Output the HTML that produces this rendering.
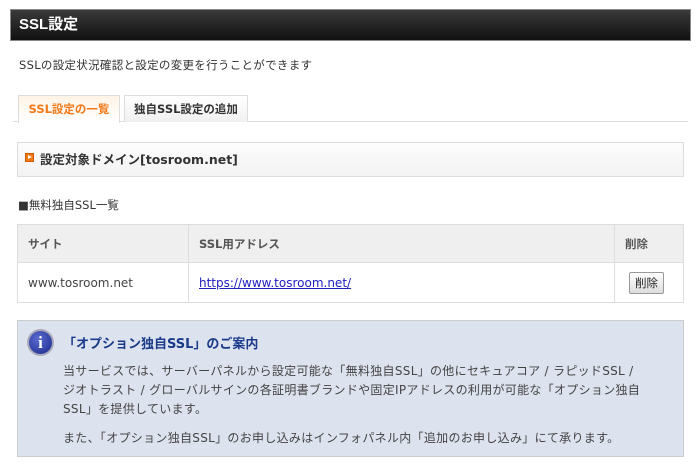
<!DOCTYPE html>
<html><head><meta charset="utf-8"><style>
*{margin:0;padding:0;box-sizing:border-box}
body{width:700px;height:470px;background:#fff;font-family:"DejaVu Sans","Noto Sans CJK JP",sans-serif;color:#333;font-size:12px;position:relative;overflow:hidden}
.a{position:absolute}
.hd{left:10px;top:9px;width:681px;height:32px;background:linear-gradient(#3a3a3a,#111);border:1px solid #888;color:#fff;font-weight:bold;font-size:15px;line-height:30px;padding-left:8px;font-family:"Liberation Sans","Noto Sans CJK JP",sans-serif}
.tab{top:95px;height:27px;border:1px solid #ddd;border-bottom:none;font-weight:bold;font-size:11.5px;line-height:26px;text-align:center}
table{border-collapse:collapse;font-size:12px}
td,th{border:1px solid #ddd;text-align:left;padding-left:10px}
th{background:#efefef;height:38px;color:#555;font-size:11.5px}
td{height:40px;color:#444}
.j{letter-spacing:0.3px}
</style></head><body>
<div class="a hd">SSL設定</div>
<div class="a j" style="left:19px;top:57px;font-size:11.5px">SSLの設定状況確認と設定の変更を行うことができます</div>
<div class="a" style="left:13px;top:121px;width:675px;height:1px;background:#ddd"></div>
<div class="a tab" style="left:18px;width:102px;background:linear-gradient(#fff3e6,#fff);color:#f27a1a;height:28px">SSL設定の一覧</div>
<div class="a tab" style="left:124px;width:124px;background:linear-gradient(#fff,#f0f0f0);color:#333">独自SSL設定の追加</div>
<div class="a" style="left:17px;top:142px;width:667px;height:35px;border:1px solid #ddd;background:linear-gradient(#fcfcfc,#f3f3f3);font-weight:bold;font-size:12.5px;line-height:33px;padding-left:22px">設定対象ドメイン[tosroom.net]</div>
<div class="a" style="left:25px;top:153px;width:9px;height:9px;background:#f07a10;border:1px solid #d05a00"><div style="margin:1px 0 0 2px;width:0;height:0;border-left:4px solid #fff;border-top:2.5px solid transparent;border-bottom:2.5px solid transparent"></div></div>
<div class="a" style="left:18px;top:197px;font-size:11.5px">■無料独自SSL一覧</div>
<table class="a" style="left:17px;top:224px;width:667px">
<tr><th style="width:171px">サイト</th><th style="width:426px">SSL用アドレス</th><th>削除</th></tr>
<tr><td>www.tosroom.net</td><td><span style="color:#2020c0;text-decoration:underline">https://www.tosroom.net/</span></td><td><span style="display:inline-block;border:1px solid #999;border-radius:2px;background:linear-gradient(#fff,#ddd);padding:2px 5px;color:#222;margin-left:4px;font-size:11.5px">削除</span></td></tr>
</table>
<div class="a" style="left:17px;top:320px;width:667px;height:137px;background:#dde3ee;border:1px solid #ccc"></div>
<div class="a" style="left:27px;top:329px;width:27px;height:27px;border-radius:50%;background:radial-gradient(circle at 40% 35%,#5a6ad0,#1a2a8a);border:2px solid #aab;color:#fff;font:bold 17px 'Liberation Serif',serif;text-align:center;line-height:23px">i</div>
<div class="a" style="left:63px;top:333px;color:#1a3a8a;font-weight:bold;font-size:13px">「オプション独自SSL」のご案内</div>
<div class="a j" style="left:63px;top:362px;width:585px;line-height:19px;color:#444;font-size:12px">当サービスでは、サーバーパネルから設定可能な「無料独自SSL」の他にセキュアコア / ラピッドSSL / ジオトラスト / グローバルサインの各証明書ブランドや固定IPアドレスの利用が可能な「オプション独自SSL」を提供しています。</div>
<div class="a j" style="left:63px;top:429px;color:#444">また、「オプション独自SSL」のお申し込みはインフォパネル内「追加のお申し込み」にて承ります。</div>
</body></html>
